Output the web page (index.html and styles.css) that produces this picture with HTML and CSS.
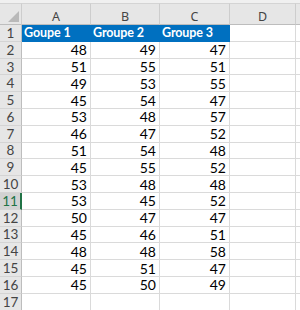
FILE: index.html
```html
<!DOCTYPE html>
<html>
<head>
<meta charset="utf-8">
<link rel="stylesheet" href="styles.css">
</head>
<body>
<div class="sheet">
  <div class="corner"><span class="tri"></span></div>
  <div class="colh">A</div><div class="colh">B</div><div class="colh">C</div><div class="colh">D</div><div class="colh last"></div>

  <div class="rowh">1</div><div class="cell head">Goupe 1</div><div class="cell head">Groupe 2</div><div class="cell head">Groupe 3</div><div class="cell"></div><div class="cell last"></div>
  <div class="rowh">2</div><div class="cell num">48</div><div class="cell num">49</div><div class="cell num">47</div><div class="cell"></div><div class="cell last"></div>
  <div class="rowh">3</div><div class="cell num">51</div><div class="cell num">55</div><div class="cell num">51</div><div class="cell"></div><div class="cell last"></div>
  <div class="rowh">4</div><div class="cell num">49</div><div class="cell num">53</div><div class="cell num">55</div><div class="cell"></div><div class="cell last"></div>
  <div class="rowh">5</div><div class="cell num">45</div><div class="cell num">54</div><div class="cell num">47</div><div class="cell"></div><div class="cell last"></div>
  <div class="rowh">6</div><div class="cell num">53</div><div class="cell num">48</div><div class="cell num">57</div><div class="cell"></div><div class="cell last"></div>
  <div class="rowh">7</div><div class="cell num">46</div><div class="cell num">47</div><div class="cell num">52</div><div class="cell"></div><div class="cell last"></div>
  <div class="rowh">8</div><div class="cell num">51</div><div class="cell num">54</div><div class="cell num">48</div><div class="cell"></div><div class="cell last"></div>
  <div class="rowh">9</div><div class="cell num">45</div><div class="cell num">55</div><div class="cell num">52</div><div class="cell"></div><div class="cell last"></div>
  <div class="rowh">10</div><div class="cell num">53</div><div class="cell num">48</div><div class="cell num">48</div><div class="cell"></div><div class="cell last"></div>
  <div class="rowh sel">11</div><div class="cell num">53</div><div class="cell num">45</div><div class="cell num">52</div><div class="cell"></div><div class="cell last"></div>
  <div class="rowh">12</div><div class="cell num">50</div><div class="cell num">47</div><div class="cell num">47</div><div class="cell"></div><div class="cell last"></div>
  <div class="rowh">13</div><div class="cell num">45</div><div class="cell num">46</div><div class="cell num">51</div><div class="cell"></div><div class="cell last"></div>
  <div class="rowh">14</div><div class="cell num">48</div><div class="cell num">48</div><div class="cell num">58</div><div class="cell"></div><div class="cell last"></div>
  <div class="rowh">15</div><div class="cell num">45</div><div class="cell num">51</div><div class="cell num">47</div><div class="cell"></div><div class="cell last"></div>
  <div class="rowh">16</div><div class="cell num">45</div><div class="cell num">50</div><div class="cell num">49</div><div class="cell"></div><div class="cell last"></div>
  <div class="rowh">17</div><div class="cell"></div><div class="cell"></div><div class="cell"></div><div class="cell"></div><div class="cell last"></div>
</div>
</body>
</html>
```

FILE: styles.css
```css
html, body {
  margin: 0;
  padding: 0;
  background: #ffffff;
}
body {
  width: 300px;
  height: 310px;
  overflow: hidden;
  font-family: Lato, "Noto Sans", "Liberation Sans", sans-serif;
  font-size: 13.5px;
  color: #000;
}
.sheet {
  display: grid;
  grid-template-columns: 22px 69px 69px 70px 66px 4px;
  grid-template-rows: 22px repeat(17, 16.8px);
  width: 300px;
  border-top: 3px solid #f0f0f0;
  box-sizing: border-box;
}
.corner {
  position: relative;
  background: #e6e6e6;
  border-right: 1px solid #cdcdcd;
  border-bottom: 1px solid #bdbdbd;
  border-top: 1px solid #d4d4d4;
}
.tri {
  position: absolute;
  right: 2px;
  bottom: 2px;
  width: 0;
  height: 0;
  border-left: 11px solid transparent;
  border-bottom: 11px solid #b9b9b9;
}
.colh {
  background: #e6e6e6;
  border-right: 1px solid #cdcdcd;
  border-bottom: 1px solid #bdbdbd;
  border-top: 1px solid #d4d4d4;
  color: #444;
  display: flex;
  align-items: center;
  justify-content: center;
  padding-top: 5px;
  font-family: "Noto Sans", Lato, sans-serif;
  font-size: 12.5px;
}
.colh.last, .cell.last {
  border-right: none;
}
.rowh {
  background: #e6e6e6;
  border-right: 1px solid #bdbdbd;
  border-bottom: 1px solid #d4d4d4;
  color: #444;
  display: flex;
  align-items: center;
  justify-content: center;
  font-size: 13.5px;
  box-sizing: border-box;
}
.rowh.sel {
  background: #d2d2d2;
  color: #217346;
  border-right: 2px solid #217346;
}
.cell {
  border-right: 1px solid #dadada;
  border-bottom: 1px solid #dadada;
  display: flex;
  align-items: center;
  padding: 0 3px;
  overflow: hidden;
  white-space: nowrap;
  box-sizing: border-box;
}
.cell.num {
  justify-content: flex-end;
  font-size: 14px;
}
.cell.head {
  background: #0070c0;
  color: #ffffff;
  font-weight: bold;
  font-size: 12.5px;
  letter-spacing: -0.1px;
  padding-left: 2px;
  border-right-color: #0070c0;
  border-bottom-color: #0070c0;
}
```
